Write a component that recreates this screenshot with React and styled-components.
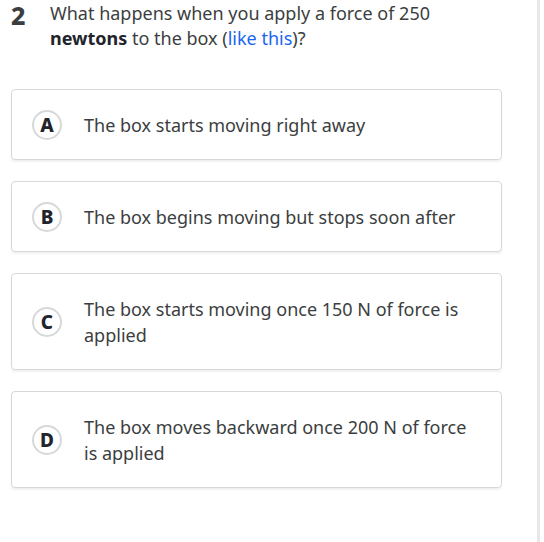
import React from "react";
import styled, { createGlobalStyle } from "styled-components";

const choices = [
  { letter: "A", text: "The box starts moving right away" },
  { letter: "B", text: "The box begins moving but stops soon after" },
  { letter: "C", text: "The box starts moving once 150 N of force is applied" },
  { letter: "D", text: "The box moves backward once 200 N of force is applied" },
];

function App() {
  return (
    <>
      <GlobalStyle />
      <Page>
        <Content>
          <Question>
            <Number>2</Number>
            <Prompt>
              What happens when you apply a force of 250{" "}
              <strong>newtons</strong> to the box (<Link>like this</Link>)?
            </Prompt>
          </Question>
          <Choices>
            {choices.map((c) => (
              <Choice key={c.letter}>
                <Letter>{c.letter}</Letter>
                <ChoiceText>{c.text}</ChoiceText>
              </Choice>
            ))}
          </Choices>
        </Content>
        <Divider />
      </Page>
    </>
  );
}

const GlobalStyle = createGlobalStyle`
  html, body {
    margin: 0;
    padding: 0;
    background: #ffffff;
  }
  body {
    font-family: "Noto Sans", Lato, sans-serif;
    color: #21242c;
  }
`;

const Page = styled.div`
  display: flex;
  width: 544px;
  height: 542px;
`;

const Content = styled.div`
  width: 537px;
  padding: 2px 35px 0 11px;
  box-sizing: border-box;
`;

const Divider = styled.div`
  width: 3px;
  background: #e6e8eb;
`;

const Question = styled.div`
  display: flex;
  align-items: flex-start;
`;

const Number = styled.div`
  flex: none;
  width: 39px;
  margin-top: -3px;
  font-size: 25px;
  font-weight: 800;
  line-height: 32px;
  color: #3b3e40;
`;

const Prompt = styled.div`
  margin-top: -1px;
  font-size: 18px;
  line-height: 25px;
  color: #3b3e40;

  strong {
    font-weight: 700;
    color: #21242c;
  }
`;

const Link = styled.span`
  color: #1865f2;
`;

const Choices = styled.div`
  display: flex;
  flex-direction: column;
  gap: 21px;
  margin-top: 38px;
`;

const Choice = styled.div`
  display: flex;
  align-items: center;
  gap: 22px;
  padding: 22px 20px 21px;
  border: 1px solid #d6d8da;
  border-radius: 4px;
  box-shadow: 0 2px 2px rgba(0, 0, 0, 0.06);
`;

const Letter = styled.div`
  flex: none;
  width: 26px;
  height: 26px;
  margin: -2px 0;
  border: 2px solid #d6d8da;
  border-radius: 50%;
  display: flex;
  align-items: center;
  justify-content: center;
  font-size: 19px;
  font-weight: 800;
  color: #21242c;
`;

const ChoiceText = styled.div`
  font-size: 18px;
  line-height: 26px;
  color: #3b3e40;
`;

export default App;
